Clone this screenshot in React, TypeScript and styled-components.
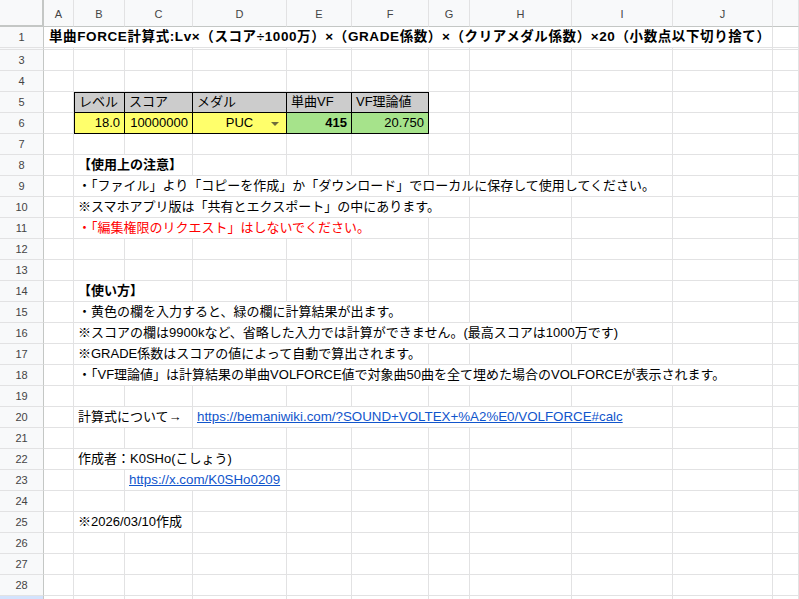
import React from 'react'
import styled, { createGlobalStyle, css } from 'styled-components'

const GlobalStyle = createGlobalStyle`
  *, *::before, *::after { box-sizing: border-box; }
  html, body {
    margin: 0;
    padding: 0;
    background: #fff;
    overflow: hidden;
  }
  body {
    font-family: "Liberation Sans", "Noto Sans CJK JP", sans-serif;
    color: #000;
  }
`

const LETTERS = ['A', 'B', 'C', 'D', 'E', 'F', 'G', 'H', 'I', 'J', 'K']
const TRACKS = '44px 30px 51px 68px 94px 65px 77px 41px 102px 101px 100px 1fr'
const GRID = '#e2e2e3'
const HEAD_LINE = '#c4c7c5'

type Kind = 'plain' | 'title' | 'bold' | 'red' | 'link' | 'th' | 'yellow' | 'green'
type Align = 'left' | 'right' | 'center'

type Block = {
  col: number
  span?: number
  text: React.ReactNode
  kind?: Kind
  align?: Align
  strong?: boolean
  dropdown?: boolean
}

const Sheet = styled.div`
  width: 799px;
  height: 599px;
  overflow: hidden;
  display: flex;
  flex-direction: column;
`

const Row = styled.div<{ $h: number }>`
  display: grid;
  grid-template-columns: ${TRACKS};
  height: ${p => p.$h}px;
  flex: none;
`

const ColHead = styled.div<{ $corner?: boolean }>`
  background: #f8f9fa;
  border-right: 1px solid ${p => (p.$corner ? HEAD_LINE : GRID)};
  border-bottom: 1px solid ${HEAD_LINE};
  display: flex;
  align-items: center;
  justify-content: center;
  padding-top: 2px;
  font-family: "Liberation Sans", Arial, sans-serif;
  font-size: 11px;
  color: #444;
  ${p => p.$corner && css`border-right-width: 2px; border-bottom-width: 2px;`}
`

const RowHead = styled.div<{ $active?: boolean }>`
  background: ${p => (p.$active ? '#d3e3fd' : '#f8f9fa')};
  border-right: 1px solid ${HEAD_LINE};
  border-bottom: 1px solid ${GRID};
  display: flex;
  align-items: center;
  justify-content: center;
  font-family: "Liberation Sans", Arial, sans-serif;
  font-size: 11px;
  color: #444;
`

const fills: Partial<Record<Kind, string>> = {
  th: '#cccccc',
  yellow: '#ffff6b',
  green: '#a6e38b',
}

const Cell = styled.div<{
  $span: number
  $kind: Kind
  $align: Align
  $strong?: boolean
  $framed?: boolean
  $top?: boolean
  $left?: boolean
}>`
  grid-column: span ${p => p.$span};
  position: relative;
  min-width: 0;
  display: flex;
  align-items: flex-end;
  justify-content: ${p =>
    p.$align === 'right' ? 'flex-end' : p.$align === 'center' ? 'center' : 'flex-start'};
  padding: 0 4px 2px;
  border-right: 1px solid ${p => (p.$framed ? '#000' : GRID)};
  border-bottom: 1px solid ${p => (p.$framed ? '#000' : GRID)};
  ${p => p.$top && css`border-top: 1px solid #000;`}
  ${p => p.$left && css`border-left: 1px solid #000;`}
  background: ${p => fills[p.$kind] ?? 'transparent'};
  font-size: 13px;
  line-height: 17px;
  white-space: nowrap;
  overflow: hidden;
  font-weight: ${p => (p.$strong || p.$kind === 'bold' || p.$kind === 'title' ? 700 : 400)};
  color: ${p => (p.$kind === 'red' ? '#ff0000' : '#000')};
  ${p => p.$kind === 'title' && css`
    font-size: 13.5px;
    letter-spacing: 0.6px;
    padding-left: 5px;
  `}
  ${p => p.$kind === 'link' && css`
    font-size: 13.33px;
  `}
`

const Link = styled.a`
  color: #1155cc;
  text-decoration: underline;
  text-underline-offset: 1px;
`

const DropArrow = styled.span`
  position: absolute;
  right: 7px;
  top: 9px;
  width: 0;
  height: 0;
  border-left: 4px solid transparent;
  border-right: 4px solid transparent;
  border-top: 4px solid #6f6c3c;
`

const Blank = styled.div`
  border-right: 1px solid ${GRID};
  border-bottom: 1px solid ${GRID};
`

const rows: Record<number, Block[]> = {
  1: [
    {
      col: 1,
      span: 10,
      kind: 'title',
      text: '単曲FORCE計算式:Lv×（スコア÷1000万）×（GRADE係数）×（クリアメダル係数）×20（小数点以下切り捨て）',
    },
  ],
  5: [
    { col: 2, kind: 'th', text: 'レベル' },
    { col: 3, kind: 'th', text: 'スコア' },
    { col: 4, kind: 'th', text: 'メダル' },
    { col: 5, kind: 'th', text: '単曲VF' },
    { col: 6, kind: 'th', text: 'VF理論値' },
  ],
  6: [
    { col: 2, kind: 'yellow', align: 'right', text: '18.0' },
    { col: 3, kind: 'yellow', align: 'right', text: '10000000' },
    { col: 4, kind: 'yellow', align: 'center', text: 'PUC', dropdown: true },
    { col: 5, kind: 'green', align: 'right', strong: true, text: '415' },
    { col: 6, kind: 'green', align: 'right', text: '20.750' },
  ],
  8: [{ col: 2, span: 2, kind: 'bold', text: '【使用上の注意】' }],
  9: [
    {
      col: 2,
      span: 8,
      text: '・「ファイル」より「コピーを作成」か「ダウンロード」でローカルに保存して使用してください。',
    },
  ],
  10: [{ col: 2, span: 6, text: '※スマホアプリ版は「共有とエクスポート」の中にあります。' }],
  11: [{ col: 2, span: 5, kind: 'red', text: '・「編集権限のリクエスト」はしないでください。' }],
  14: [{ col: 2, span: 2, kind: 'bold', text: '【使い方】' }],
  15: [{ col: 2, span: 5, text: '・黄色の欄を入力すると、緑の欄に計算結果が出ます。' }],
  16: [
    {
      col: 2,
      span: 8,
      text: '※スコアの欄は9900kなど、省略した入力では計算ができません。(最高スコアは1000万です)',
    },
  ],
  17: [{ col: 2, span: 5, text: '※GRADE係数はスコアの値によって自動で算出されます。' }],
  18: [
    {
      col: 2,
      span: 9,
      text: '・「VF理論値」は計算結果の単曲VOLFORCE値で対象曲50曲を全て埋めた場合のVOLFORCEが表示されます。',
    },
  ],
  20: [
    { col: 2, span: 2, text: '計算式について→' },
    {
      col: 4,
      span: 6,
      kind: 'link',
      text: (
        <Link href="https://bemaniwiki.com/?SOUND+VOLTEX+%A2%E0/VOLFORCE#calc">
          https://bemaniwiki.com/?SOUND+VOLTEX+%A2%E0/VOLFORCE#calc
        </Link>
      ),
    },
  ],
  22: [{ col: 2, span: 3, text: '作成者：K0SHo(こしょう)' }],
  23: [
    {
      col: 3,
      span: 2,
      kind: 'link',
      text: <Link href="https://x.com/K0SHo0209">https://x.com/K0SHo0209</Link>,
    },
  ],
  25: [{ col: 2, span: 2, text: '※2026/03/10作成' }],
}

// the framed block B5:F6
const isFramed = (n: number) => n === 5 || n === 6

const renderCells = (n: number) => {
  const blocks = rows[n] ?? []
  const out: React.ReactNode[] = []
  let c = 1
  while (c <= 11) {
    const b = blocks.find(x => x.col === c)
    const span = b?.span ?? 1
    const framed = isFramed(n) && c >= 2 && c <= 6
    out.push(
      <Cell
        key={c}
        $span={span}
        $kind={b?.kind ?? 'plain'}
        $align={b?.align ?? 'left'}
        $strong={b?.strong}
        $framed={framed}
        $top={framed && n === 5}
        $left={framed && c === 2}
      >
        {b?.text}
        {b?.dropdown && <DropArrow />}
      </Cell>,
    )
    c += span
  }
  return out
}

const bodyRows = Array.from({ length: 26 }, (_, i) => i + 3)

export default function App() {
  return (
    <>
      <GlobalStyle />
      <Sheet>
        <Row $h={27}>
          <ColHead $corner />
          {LETTERS.map(l => (
            <ColHead key={l}>{l === 'K' ? '' : l}</ColHead>
          ))}
        </Row>

        <Row $h={21}>
          <RowHead>1</RowHead>
          {renderCells(1)}
        </Row>

        {/* row 2 is hidden, shown as a double rule */}
        <Row $h={2}>
          <RowHead />
          {LETTERS.map(l => (
            <Blank key={l} />
          ))}
        </Row>

        {bodyRows.map(n => (
          <Row key={n} $h={21}>
            <RowHead>{n}</RowHead>
            {renderCells(n)}
          </Row>
        ))}

        {/* selected row just below the fold */}
        <Row $h={21}>
          <RowHead $active />
          {renderCells(29)}
        </Row>
      </Sheet>
    </>
  )
}
